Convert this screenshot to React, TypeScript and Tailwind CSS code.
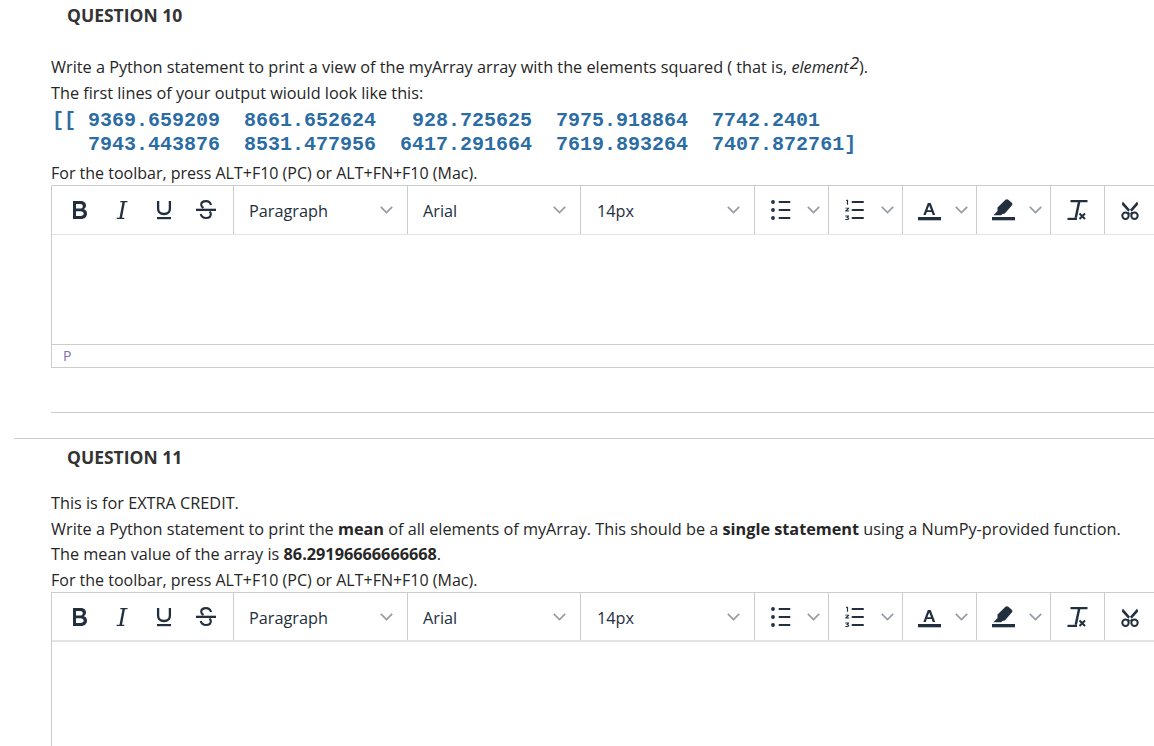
import React from "react";

const ink = "#222f3e";

function Chevron() {
  return (
    <svg width="13" height="8" viewBox="0 0 13 8" fill="none" className="shrink-0">
      <path d="M.8.8l5.700 5.700L12.200.8" stroke="#969ca3" strokeWidth="1.700" />
    </svg>
  );
}

function IconBox({ children, w = 24 }: { children: React.ReactNode; w?: number }) {
  return (
    <svg width={w} height="24" viewBox={`0 0 ${w} 24`} fill={ink} className="shrink-0">
      {children}
    </svg>
  );
}

const Bold = () => (
  <IconBox>
    <path
      fillRule="evenodd"
      d="M5 3h7.500c3.500 0 5.500 1.800 5.500 4.600 0 1.700-.9 3-2.300 3.600 2 .6 3.300 2.100 3.300 4.300 0 3.300-2.400 5.500-6 5.500H5V3zm3 3v4.500h4c1.700 0 2.800-.9 2.800-2.300S13.700 6 12 6H8zm0 7.200V18h4.500c2 0 3.200-.9 3.200-2.400s-1.200-2.400-3.200-2.400H8z"
    />
  </IconBox>
);
const Italic = () => (
  <IconBox>
    <path d="M10.500 3h7v1.300h-2.600L12 19.700h2.300V21H6.700v-1.300h2.800l3-15.400h-2.300z" />
  </IconBox>
);
const Underline = () => (
  <IconBox>
    <rect x="5" y="19" width="14" height="2.200" />
    <path d="M6.100 3v7.500c0 3.500 2.300 5.500 5.900 5.500s5.900-2 5.900-5.500V3" fill="none" stroke={ink} strokeWidth="2.300" />
  </IconBox>
);
const Strike = () => (
  <IconBox>
    <rect x="2" y="10.700" width="20" height="2.300" />
    <path
      d="M17 7c-.6-2.500-2.500-3.900-5-3.900-2.800 0-4.800 1.400-4.800 3.600 0 1.500.9 2.500 2.300 3.300M15.500 13.500c.8.700 1.300 1.500 1.300 2.700 0 2.400-2 3.800-4.800 3.800-2.700 0-4.700-1.400-5.300-3.900"
      fill="none"
      stroke={ink}
      strokeWidth="2.100"
    />
  </IconBox>
);
const Bullets = () => (
  <IconBox>
    <circle cx="4" cy="4" r="1.900" />
    <circle cx="4" cy="12" r="1.900" />
    <circle cx="4" cy="20" r="1.900" />
    <rect x="9.500" y="3" width="12" height="2" rx="1" />
    <rect x="9.500" y="11" width="12" height="2" rx="1" />
    <rect x="9.500" y="19" width="12" height="2" rx="1" />
  </IconBox>
);
const Numbers = () => (
  <IconBox>
    <rect x="8.500" y="3" width="12.500" height="2" rx="1" />
    <rect x="8.500" y="11" width="12.500" height="2" rx="1" />
    <rect x="8.500" y="19" width="12.500" height="2" rx="1" />
    <path d="M3.600 1.800h1.500v5H3.900V3.100h-.8v-.8zM2.300 9.700h3.900v.9L4.200 12.500h2v.9H2.300v-.9l2.300-1.900H2.300zM2.300 17.500h3.800v.9l-1.300.9c1 .1 1.500.6 1.500 1.300 0 .9-.8 1.400-2 1.400h-2v-.9h1.900c.5 0 .8-.2.8-.5s-.3-.5-.9-.5H3.300v-.7l1.200-.9H2.300z" />
  </IconBox>
);
const TextColor = () => (
  <IconBox w={26}>
    <rect x="1" y="19" width="23" height="3.300" />
    <path fillRule="evenodd" d="M10.800 5h2.900l4.500 12h-2.500l-1-2.900H9.800L8.800 17H6.300l4.500-12zm1.400 2.600l-1.800 4.600h3.600l-1.800-4.600z" />
  </IconBox>
);
const Highlight = () => (
  <IconBox w={26}>
    <rect x="1" y="19" width="23" height="3.300" />
    <path d="M14.500 1.800c.8-.8 2-.8 2.800 0l3.500 3c.8.800.8 2 0 2.800l-7 8-2.300.3-1.500 1.400H2.500l4-4.300V9.500z" />
  </IconBox>
);
const ClearFormat = () => (
  <IconBox>
    <rect x="1.500" y="19.800" width="9.500" height="2.200" />
    <path d="M4.500 2h17v2.300h-7.200l-3.300 15.500H8.500L11.800 4.300H4.500z" />
    <path d="M13.500 15.500l5.500 5.500M19 15.500l-5.500 5.500" stroke={ink} strokeWidth="2" fill="none" />
  </IconBox>
);
const Cut = () => (
  <IconBox>
    <g fill="none" stroke={ink}>
      <circle cx="7.500" cy="17.800" r="3.200" strokeWidth="2" />
      <circle cx="16.500" cy="17.800" r="3.200" strokeWidth="2" />
    </g>
    <path d="M4.800 3.500l10.300 11.800-2 1.500L3.800 6.500zM19.200 3.500L8.900 15.300l2 1.500L20.200 6.500z" />
  </IconBox>
);

function Select({ label, className }: { label: string; className: string }) {
  return (
    <div className={`flex items-center justify-between border-r border-[#cccccc] pr-[14px] text-[16.25px] text-[#222f3e] ${className}`}>
      <span className="relative top-[1px]">{label}</span>
      <Chevron />
    </div>
  );
}

function Split({ children }: { children: React.ReactNode }) {
  return (
    <div className="flex items-center justify-between border-r border-[#cccccc] w-[74px] pl-[14px] pr-[8px]">
      {children}
      <Chevron />
    </div>
  );
}

function Toolbar({ line }: { line: string }) {
  return (
    <div className={`flex items-stretch h-[49px] ${line}`}>
      <div className="flex items-center gap-[18px] w-[182px] pl-[15.5px] border-r border-[#cccccc]">
        <Bold />
        <Italic />
        <Underline />
        <Strike />
      </div>
      <Select label="Paragraph" className="w-[174px] pl-[15px]" />
      <Select label="Arial" className="w-[173px] pl-[15px]" />
      <Select label="14px" className="w-[174px] pl-[16px]" />
      <Split><Bullets /></Split>
      <Split><Numbers /></Split>
      <Split><TextColor /></Split>
      <Split><Highlight /></Split>
      <div className="flex items-center justify-center w-[54px] border-r border-[#cccccc]"><ClearFormat /></div>
      <div className="flex items-center justify-center w-[49px]"><Cut /></div>
    </div>
  );
}

export default function App() {
  return (
    <div className="w-[1154px] h-[746px] overflow-hidden bg-white text-[#262626] text-[16.25px] leading-[26px] font-['Open_Sans',sans-serif]">
      <div className="pl-[67px] pt-[2px] h-[44px] text-[17.5px] font-bold text-[#333333]">QUESTION 10</div>
      <div className="pl-[51px] pt-[10px]">
        <p className="h-[26px]">
          Write a Python statement to print a view of the myArray array with the elements squared ( that is, <i>element</i>
          <i className="text-[17px] relative top-[-4px] leading-none ml-[1px]">2</i>).
        </p>
        <p className="h-[26px]">The first lines of your output wiould look like this:</p>
        <pre className="font-['Liberation_Mono',monospace] font-bold text-[20px] leading-[24px] text-[#2b6ca3] pl-[1px] h-[47px] mt-[3px]">{"[[ 9369.659209  8661.652624   928.725625  7975.918864  7742.2401\n   7943.443876  8531.477956  6417.291664  7619.893264  7407.872761]"}</pre>
        <p className="h-[26px] mt-[4px] text-[16px]">For the toolbar, press ALT+F10 (PC) or ALT+FN+F10 (Mac).</p>
        <div className="mt-[-1px] border-t border-l border-b border-[#cccccc] h-[183px] flex flex-col">
          <Toolbar line="border-b border-[#e3e3e3]" />
          <div className="h-[110px] border-b border-[#cccccc]" />
          <div className="pl-[11px] text-[14px] leading-[22px] text-[#7f6fb0]">P</div>
        </div>
        <div className="mt-[44px] border-t border-[#cccccc] h-0" />
      </div>
      <div className="ml-[14px] mt-[25px] border-t border-[#cccccc] h-[44px] pl-[53px] pt-[5px] text-[17.5px] font-bold text-[#333333]">QUESTION 11</div>
      <div className="pl-[51px] pt-[8px]">
        <p className="h-[26px]">This is for EXTRA CREDIT.</p>
        <p className="h-[25px] whitespace-nowrap">
          Write a Python statement to print the <b>mean</b> of all elements of myArray. This should be a <b>single statement</b> using a NumPy-provided function.
        </p>
        <p className="h-[26px]">The mean value of the array is <b>86.29196666666668</b>.</p>
        <p className="h-[26px] text-[16px]">For the toolbar, press ALT+F10 (PC) or ALT+FN+F10 (Mac).</p>
        <div className="mt-[-1px] border-t border-l border-[#cccccc] h-[200px]">
          <Toolbar line="border-b-2 border-[#e3e3e3]" />
        </div>
      </div>
    </div>
  );
}
